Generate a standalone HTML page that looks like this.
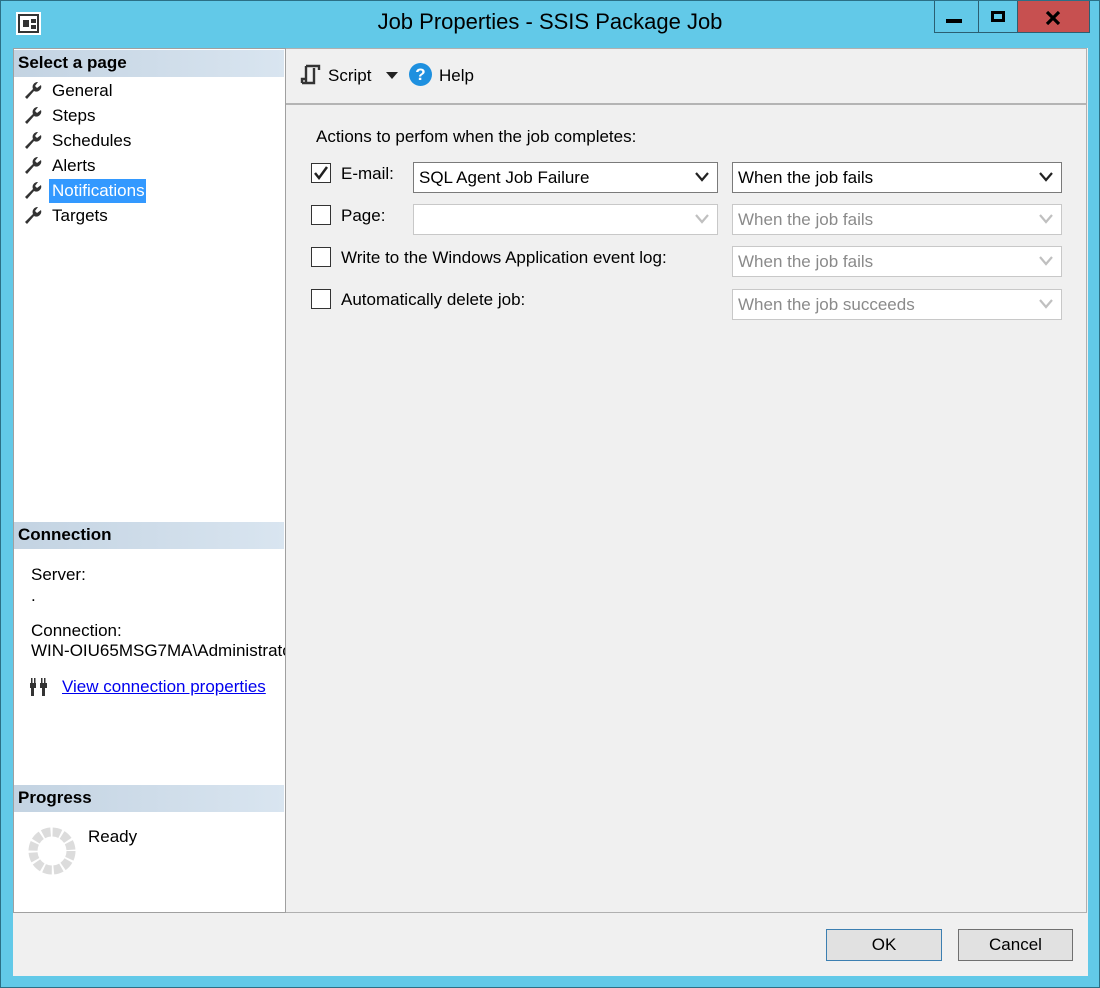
<!DOCTYPE html>
<html><head><meta charset="utf-8"><style>
*{margin:0;padding:0;box-sizing:border-box}
body{width:1100px;height:988px;background:#62c9e8;font-family:"Liberation Sans",sans-serif;font-size:17px;color:#000;position:relative;overflow:hidden}
.a{position:absolute}
.frame{left:0;top:0;width:1100px;height:988px;border:1px solid #2b6f86}
.title{left:0;top:9px;width:1100px;text-align:center;font-size:22px;color:#000}
.hdr{left:14px;width:270px;height:27px;background:linear-gradient(90deg,#c3d3e2,#d9e5f0);font-weight:bold;padding:3px 4px;font-size:17px}
.nav{left:52px;font-size:17px}
.cb{width:20px;height:20px;border:1px solid #333;background:#fff}
.dd{height:31px;border:1px solid #7a7a7a;background:#fff;padding:5px 5px;font-size:17px}
.dd.dis{border-color:#c8c8c8;color:#8a8a8a}
.arr{position:absolute;right:8px;top:8px;width:14px;height:12px}
.btn{height:32px;border:1px solid #adadad;background:#e1e1e1;text-align:center;line-height:30px;font-size:17px}
</style></head><body>
<div class="a frame"></div>
<div class="a" style="left:16px;top:12px;width:25px;height:23px;border:2px solid #fff;background:#fff"><div style="width:100%;height:100%;border:2px solid #333;position:relative"><div class="a" style="left:3px;top:4px;width:6px;height:7px;background:#333"></div><div class="a" style="left:11px;top:3px;width:5px;height:4px;background:#333"></div><div class="a" style="left:11px;top:9px;width:5px;height:4px;background:#333"></div></div></div>
<div class="a title">Job Properties - SSIS Package Job</div>
<div class="a" style="left:934px;top:1px;width:45px;height:32px;border:1px solid #2b5f72;border-top:none"></div>
<div class="a" style="left:946px;top:19px;width:16px;height:4px;background:#000"></div>
<div class="a" style="left:978px;top:1px;width:40px;height:32px;border:1px solid #2b5f72;border-top:none"></div>
<div class="a" style="left:991px;top:11px;width:14px;height:11px;border:3px solid #000"></div>
<div class="a" style="left:1017px;top:1px;width:73px;height:32px;background:#c75050;border:1px solid #2b5f72;border-top:none"></div>
<svg class="a" style="left:1045px;top:11px" width="16" height="14"><path d="M2 1 L14 13 M14 1 L2 13" stroke="#000" stroke-width="3.2"/></svg>
<div class="a" style="left:13px;top:48px;width:1075px;height:928px;background:#f0f0f0"></div>
<div class="a" style="left:13px;top:48px;width:273px;height:865px;background:#fff;border:1px solid #a0a0a0"></div>
<div class="a" style="left:286px;top:48px;width:801px;height:865px;border:1px solid #b0b0b0;border-left:none;background:#f0f0f0"></div>
<div class="a" style="left:286px;top:103px;width:800px;height:2px;background:#b4b4b4"></div>
<div class="a hdr" style="top:50px">Select a page</div>
<svg class="a" style="left:22px;top:80px" width="22" height="150" viewBox="0 0 22 150">
<g fill="#333"><path id="w" d="M3 17 L11 9 A5 5 0 0 1 16 2 L13 6 L15 8 L19 5 A5 5 0 0 1 12 11 L5 19 Z"/>
<use href="#w" y="25"/><use href="#w" y="50"/><use href="#w" y="75"/><use href="#w" y="100"/><use href="#w" y="125"/></g></svg>
<div class="a nav" style="top:81px">General</div>
<div class="a nav" style="top:106px">Steps</div>
<div class="a nav" style="top:131px">Schedules</div>
<div class="a nav" style="top:156px">Alerts</div>
<div class="a" style="left:49px;top:179px;width:97px;height:24px;background:#3399ff"></div>
<div class="a nav" style="top:181px;color:#fff">Notifications</div>
<div class="a nav" style="top:206px">Targets</div>
<div class="a hdr" style="top:522px">Connection</div>
<div class="a" style="left:31px;top:565px">Server:</div>
<div class="a" style="left:31px;top:586px">.</div>
<div class="a" style="left:31px;top:621px">Connection:</div>
<div class="a" style="left:31px;top:641px;width:254px;overflow:hidden;white-space:nowrap">WIN-OIU65MSG7MA\Administrator</div>
<svg class="a" style="left:28px;top:677px" width="22" height="20"><g fill="#333"><rect x="2" y="6" width="6" height="5"/><rect x="3" y="11" width="3" height="8"/><rect x="12" y="6" width="7" height="5"/><rect x="14" y="11" width="3" height="8"/><rect x="3" y="1" width="1.5" height="5"/><rect x="6" y="1" width="1.5" height="5"/><rect x="13" y="1" width="1.5" height="5"/><rect x="16" y="1" width="1.5" height="5"/></g></svg>
<div class="a" style="left:62px;top:677px;color:#0000ee;text-decoration:underline">View connection properties</div>
<div class="a hdr" style="top:785px">Progress</div>
<svg class="a" style="left:27px;top:826px" width="50" height="50"><circle cx="25" cy="25" r="19" fill="none" stroke="#dcdcdc" stroke-width="9" stroke-dasharray="8 2"/></svg>
<div class="a" style="left:88px;top:827px">Ready</div>
<svg class="a" style="left:299px;top:63px" width="24" height="24"><path d="M7 3 H20 V7 M7 3 V20 M3 20 H15 V5 M3 20 V16 H6" fill="none" stroke="#333" stroke-width="2.4"/></svg>
<div class="a" style="left:328px;top:66px">Script</div>
<div class="a" style="left:386px;top:72px;width:0;height:0;border-left:6px solid transparent;border-right:6px solid transparent;border-top:7px solid #222"></div>
<div class="a" style="left:409px;top:63px;width:23px;height:23px;border-radius:50%;background:#1e90df;color:#fff;font-weight:bold;text-align:center;line-height:23px;font-size:17px">?</div>
<div class="a" style="left:439px;top:66px">Help</div>
<div class="a" style="left:316px;top:127px">Actions to perfom when the job completes:</div>
<div class="a cb" style="left:311px;top:163px"></div>
<svg class="a" style="left:313px;top:165px" width="16" height="16"><path d="M2 8 L6 13 L14 2" fill="none" stroke="#222" stroke-width="2.5"/></svg>
<div class="a" style="left:341px;top:164px">E-mail:</div>
<div class="a cb" style="left:311px;top:205px"></div>
<div class="a" style="left:341px;top:206px">Page:</div>
<div class="a cb" style="left:311px;top:247px"></div>
<div class="a" style="left:341px;top:248px">Write to the Windows Application event log:</div>
<div class="a cb" style="left:311px;top:289px"></div>
<div class="a" style="left:341px;top:290px">Automatically delete job:</div>
<svg width="0" height="0" style="position:absolute"><defs><path id="ch" d="M1 2 L7 9 L13 2" fill="none" stroke-width="2.2"/></defs></svg>
<div class="a dd" style="left:413px;top:162px;width:305px">SQL Agent Job Failure<svg class="arr"><use href="#ch" stroke="#222"/></svg></div>
<div class="a dd" style="left:732px;top:162px;width:330px">When the job fails<svg class="arr"><use href="#ch" stroke="#222"/></svg></div>
<div class="a dd dis" style="left:413px;top:204px;width:305px"><svg class="arr"><use href="#ch" stroke="#c0c0c0"/></svg></div>
<div class="a dd dis" style="left:732px;top:204px;width:330px">When the job fails<svg class="arr"><use href="#ch" stroke="#c0c0c0"/></svg></div>
<div class="a dd dis" style="left:732px;top:246px;width:330px">When the job fails<svg class="arr"><use href="#ch" stroke="#c0c0c0"/></svg></div>
<div class="a dd dis" style="left:732px;top:289px;width:330px">When the job succeeds<svg class="arr"><use href="#ch" stroke="#c0c0c0"/></svg></div>
<div class="a btn" style="left:826px;top:929px;width:116px;border-color:#3c7fb1">OK</div>
<div class="a btn" style="left:958px;top:929px;width:115px;border-color:#707070">Cancel</div>
</body></html>
